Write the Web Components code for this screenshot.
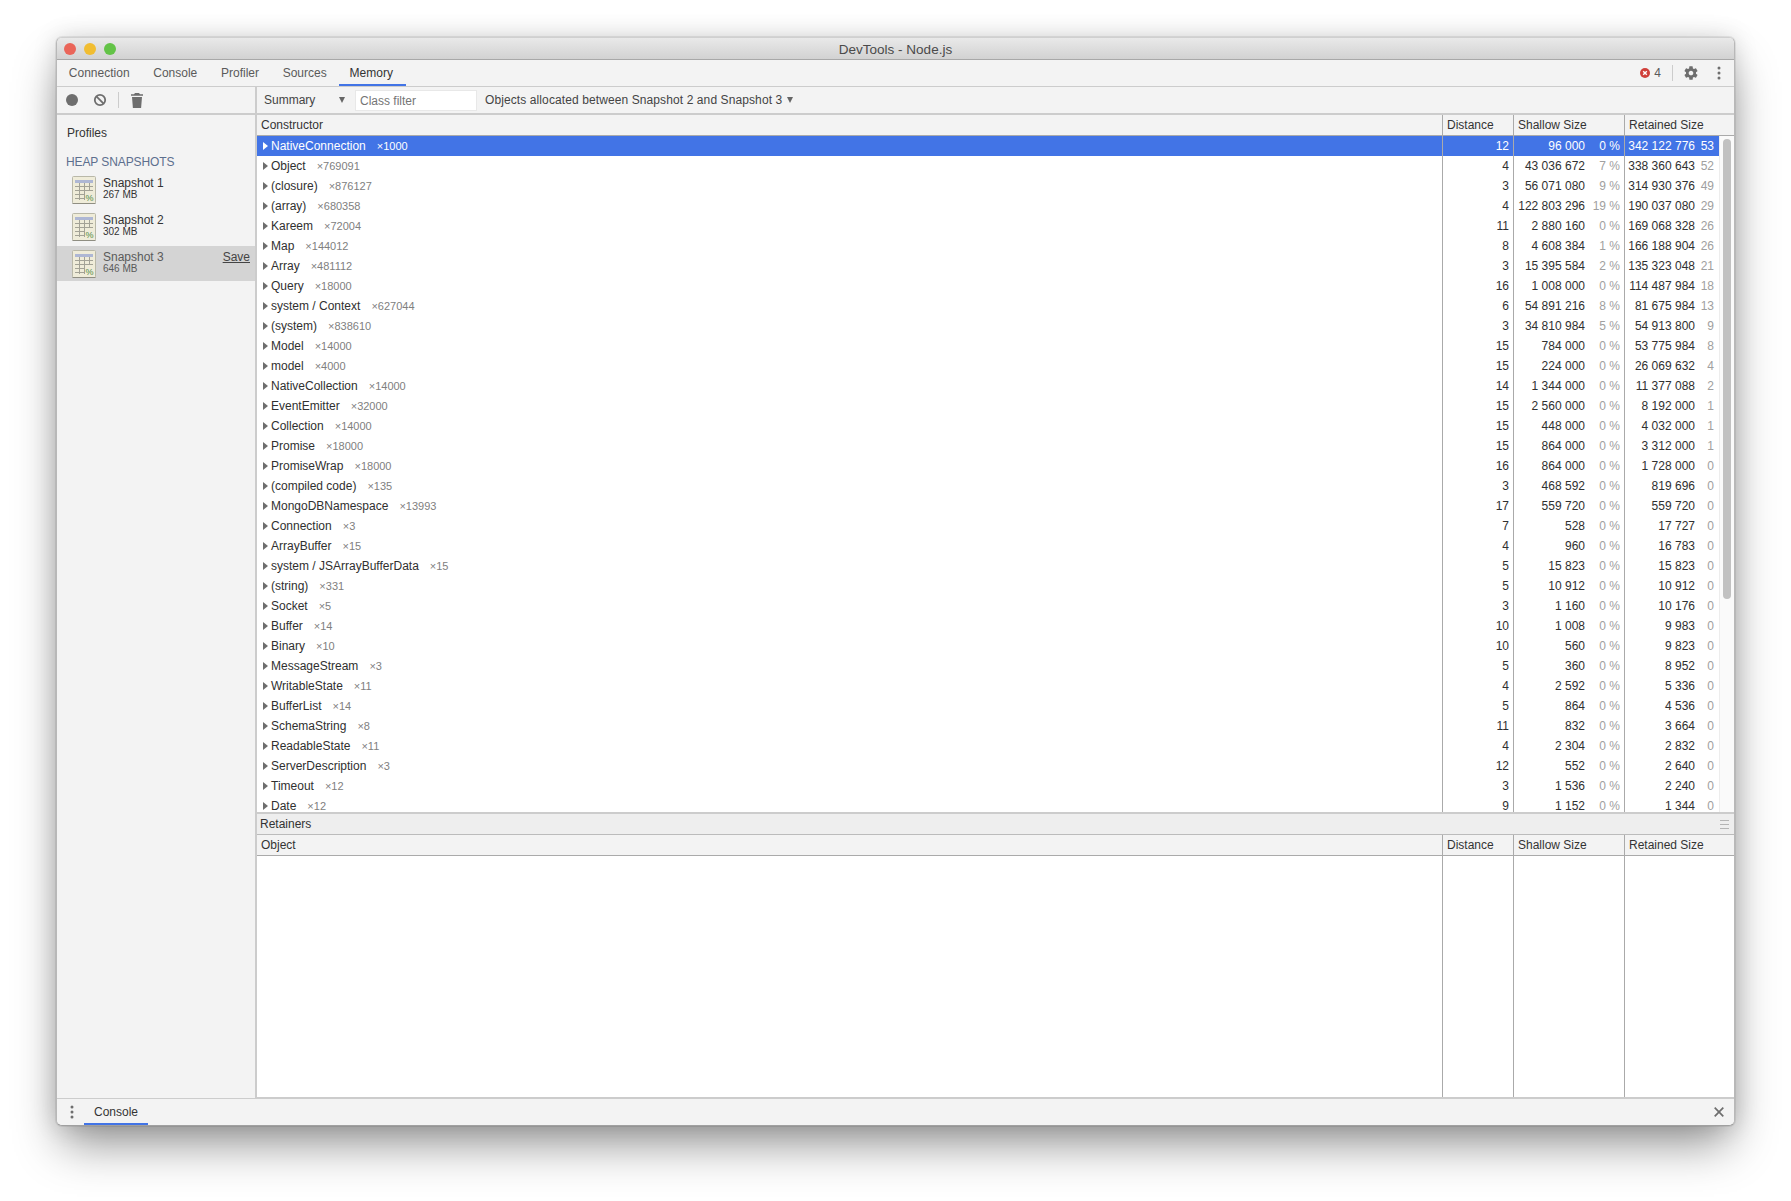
<!DOCTYPE html>
<html>
<head>
<meta charset="utf-8">
<title>DevTools - Node.js</title>
<style>
    html, body { margin: 0; background: #fff; }
    body { padding: 37px 56px 0; height: 1164px; overflow: hidden; font: 12px "Liberation Sans", Arial, sans-serif; color: #333; }
</style>
</head>
<body>
<dt-window></dt-window>

<script>
const ROWS = [
    ['NativeConnection', '1000', '12', '96 000', '0', '342 122 776', '53'],
    ['Object', '769091', '4', '43 036 672', '7', '338 360 643', '52'],
    ['(closure)', '876127', '3', '56 071 080', '9', '314 930 376', '49'],
    ['(array)', '680358', '4', '122 803 296', '19', '190 037 080', '29'],
    ['Kareem', '72004', '11', '2 880 160', '0', '169 068 328', '26'],
    ['Map', '144012', '8', '4 608 384', '1', '166 188 904', '26'],
    ['Array', '481112', '3', '15 395 584', '2', '135 323 048', '21'],
    ['Query', '18000', '16', '1 008 000', '0', '114 487 984', '18'],
    ['system / Context', '627044', '6', '54 891 216', '8', '81 675 984', '13'],
    ['(system)', '838610', '3', '34 810 984', '5', '54 913 800', '9'],
    ['Model', '14000', '15', '784 000', '0', '53 775 984', '8'],
    ['model', '4000', '15', '224 000', '0', '26 069 632', '4'],
    ['NativeCollection', '14000', '14', '1 344 000', '0', '11 377 088', '2'],
    ['EventEmitter', '32000', '15', '2 560 000', '0', '8 192 000', '1'],
    ['Collection', '14000', '15', '448 000', '0', '4 032 000', '1'],
    ['Promise', '18000', '15', '864 000', '0', '3 312 000', '1'],
    ['PromiseWrap', '18000', '16', '864 000', '0', '1 728 000', '0'],
    ['(compiled code)', '135', '3', '468 592', '0', '819 696', '0'],
    ['MongoDBNamespace', '13993', '17', '559 720', '0', '559 720', '0'],
    ['Connection', '3', '7', '528', '0', '17 727', '0'],
    ['ArrayBuffer', '15', '4', '960', '0', '16 783', '0'],
    ['system / JSArrayBufferData', '15', '5', '15 823', '0', '15 823', '0'],
    ['(string)', '331', '5', '10 912', '0', '10 912', '0'],
    ['Socket', '5', '3', '1 160', '0', '10 176', '0'],
    ['Buffer', '14', '10', '1 008', '0', '9 983', '0'],
    ['Binary', '10', '10', '560', '0', '9 823', '0'],
    ['MessageStream', '3', '5', '360', '0', '8 952', '0'],
    ['WritableState', '11', '4', '2 592', '0', '5 336', '0'],
    ['BufferList', '14', '5', '864', '0', '4 536', '0'],
    ['SchemaString', '8', '11', '832', '0', '3 664', '0'],
    ['ReadableState', '11', '4', '2 304', '0', '2 832', '0'],
    ['ServerDescription', '3', '12', '552', '0', '2 640', '0'],
    ['Timeout', '12', '3', '1 536', '0', '2 240', '0'],
    ['Date', '12', '9', '1 152', '0', '1 344', '0']
];

const COLS = '1185px 71px 111px 110px';

class HeapRow extends HTMLElement {
    connectedCallback() {
        const [name, count, dist, shallow, sp, retained, rp] = this.data;
        this.attachShadow({ mode: 'open' });
        this.shadowRoot.innerHTML = `
            <style>
                :host {
                    display: grid;
                    grid-template-columns: 1185px 71px 111px 95px;
                    height: 20px;
                    line-height: 20px;
                    color: #303030;
                    white-space: nowrap;
                }
                .name { display: flex; align-items: center; padding-left: 6px; }
                .arrow {
                    width: 0; height: 0; margin-right: 3px;
                    border-left: 5px solid #6e6e6e;
                    border-top: 4px solid transparent;
                    border-bottom: 4px solid transparent;
                }
                .count { margin-left: 11px; font-size: 11px; color: #808080; }
                .cell { border-left: 1px solid #aaa; text-align: right; }
                .dist { padding-right: 4px; }
                .pair { display: flex; justify-content: flex-end; padding-right: 4px; }
                .pair.ret { padding-right: 5px; }
                .sp { width: 35px; color: #a0a0a0; }
                .rp { width: 19px; color: #a0a0a0; }
                :host([selected]) { background: #4274e6; color: #fff; }
                :host([selected]) .arrow { border-left-color: #fff; }
                :host([selected]) .count,
                :host([selected]) .sp,
                :host([selected]) .rp { color: #fff; }
            </style>
            <div class="name"><span class="arrow"></span><span>${name}</span><span class="count">×${count}</span></div>
            <div class="cell dist">${dist}</div>
            <div class="cell pair"><span>${shallow}</span><span class="sp">${sp} %</span></div>
            <div class="cell pair ret"><span>${retained}</span><span class="rp">${rp}</span></div>
        `;
    }
}

class GridHeader extends HTMLElement {
    connectedCallback() {
        const labels = this.getAttribute('labels').split('|');
        this.attachShadow({ mode: 'open' });
        this.shadowRoot.innerHTML = `
            <style>
                :host {
                    display: grid;
                    grid-template-columns: ${COLS};
                    height: 20px;
                    line-height: 20px;
                    background: #f3f3f3;
                    border-bottom: 1px solid #aaa;
                    color: #333;
                    flex: none;
                }
                div { padding-left: 4px; }
                div + div { border-left: 1px solid #aaa; }
            </style>
            ${labels.map(l => `<div>${l}</div>`).join('')}
        `;
    }
}

class HeapGrid extends HTMLElement {
    connectedCallback() {
        this.attachShadow({ mode: 'open' });
        this.shadowRoot.innerHTML = `
            <style>
                :host { display: flex; height: 676px; overflow: hidden; flex: none; background: #fff; }
                .rows { width: 1462px; flex: none; }
                .track { flex: 1; border-left: 1px solid #ededed; background: #fafafa; padding: 3px 3px 0 3px; }
                .thumb { width: 8px; height: 460px; background: #c1c1c1; border-radius: 4px; }
            </style>
            <div class="rows"></div>
            <div class="track"><div class="thumb"></div></div>
        `;
        const rows = this.shadowRoot.querySelector('.rows');
        ROWS.forEach((data, i) => {
            const row = document.createElement('heap-row');
            row.data = data;
            if (i === 0) row.setAttribute('selected', '');
            rows.appendChild(row);
        });
    }
}

class EmptyGrid extends HTMLElement {
    connectedCallback() {
        this.attachShadow({ mode: 'open' });
        this.shadowRoot.innerHTML = `
            <style>
                :host { display: grid; grid-template-columns: ${COLS}; flex: 1; background: #fff; }
                div + div { border-left: 1px solid #aaa; }
            </style>
            <div></div><div></div><div></div><div></div>
        `;
    }
}

class SnapshotItem extends HTMLElement {
    connectedCallback() {
        this.attachShadow({ mode: 'open' });
        this.shadowRoot.innerHTML = `
            <style>
                :host {
                    display: flex;
                    align-items: center;
                    height: 35px;
                    margin-bottom: 2px;
                    padding: 0 5px 0 15px;
                    color: #333;
                }
                :host([selected]) { background: #d4d4d4; color: #5a5a5a; }
                svg { flex: none; margin-right: 7px; }
                .text { flex: 1; line-height: 12px; margin-top: -3px; }
                .sub { font-size: 10px; line-height: 11px; }
                ::slotted(u) { color: #444; align-self: flex-start; margin-top: 4px; }
            </style>
            <svg width="24" height="28" viewBox="0 0 24 28">
                <rect x="0.5" y="0.5" width="23" height="27" rx="1" fill="#efecd9" stroke="#b9b8a8"/>
                <path d="M0.5 27.500h23" stroke="#8f8e82"/>
                <rect x="3" y="4" width="18" height="3" fill="#aeb7d4"/>
                <path d="M3 10.500h18M3 14.500h18M3 18.500h9M3 22.500h9M7.500 7v17M12.500 7v17M17.500 7v7" stroke="#a3a296" fill="none"/>
                <text x="13.500" y="24.500" font-size="9" fill="#4f8a45" font-family="Liberation Sans">%</text>
            </svg>
            <div class="text">
                <div>${this.getAttribute('name')}</div>
                <div class="sub">${this.getAttribute('size')}</div>
            </div>
            <slot></slot>
        `;
    }
}

class ProfileSidebar extends HTMLElement {
    connectedCallback() {
        this.attachShadow({ mode: 'open' });
        this.shadowRoot.innerHTML = `
            <style>
                :host { display: block; width: 198px; flex: none; background: #f3f3f3; }
                .title { height: 14px; line-height: 14px; padding: 11px 0 0 10px; color: #333; }
                .group { height: 14px; line-height: 14px; margin: 15px 0 3px 9px; color: #5d6f8e; letter-spacing: -0.1px; }
            </style>
            <div class="title">Profiles</div>
            <div class="group">HEAP SNAPSHOTS</div>
            <snapshot-item name="Snapshot 1" size="267 MB"></snapshot-item>
            <snapshot-item name="Snapshot 2" size="302 MB"></snapshot-item>
            <snapshot-item name="Snapshot 3" size="646 MB" selected><u>Save</u></snapshot-item>
        `;
    }
}

class RecordBar extends HTMLElement {
    connectedCallback() {
        this.attachShadow({ mode: 'open' });
        this.shadowRoot.innerHTML = `
            <style>
                :host {
                    display: flex;
                    align-items: center;
                    height: 26px;
                    width: 198px;
                    flex: none;
                    box-sizing: border-box;
                    padding-left: 8px;
                }
                svg { display: block; flex: none; }
                .sep { width: 1px; height: 16px; background: #ccc; margin: 0 12px 0 11px; }
            </style>
            <svg width="14" height="14" viewBox="0 0 14 14" style="margin-right:14px"><circle cx="7" cy="7" r="6" fill="#6e6e6e"/></svg>
            <svg width="14" height="14" viewBox="0 0 14 14"><circle cx="7" cy="7" r="5.200" fill="none" stroke="#6e6e6e" stroke-width="1.800"/><path d="M3.400 3.400l7.200 7.200" stroke="#6e6e6e" stroke-width="1.800"/></svg>
            <span class="sep"></span>
            <svg width="12" height="15" viewBox="0 0 12 15"><path d="M4 0h4l1 1.200h3v1.600H0V1.200h3zM1 4h10l-.9 11H1.900z" fill="#6e6e6e"/></svg>
        `;
    }
}

class FilterBar extends HTMLElement {
    connectedCallback() {
        this.attachShadow({ mode: 'open' });
        this.shadowRoot.innerHTML = `
            <style>
                :host {
                    display: flex;
                    align-items: center;
                    height: 26px;
                    flex: 1;
                    border-left: 2px solid #ccc;
                    color: #444;
                    white-space: nowrap;
                }
                .select { display: flex; align-items: center; justify-content: space-between; width: 82px; margin-left: 7px; }
                .tri { width: 0; height: 0; border-top: 6px solid #666; border-left: 3.500px solid transparent; border-right: 3.500px solid transparent; }
                .select .tri { margin-right: 1px; }
                .input {
                    box-sizing: border-box;
                    width: 122px;
                    height: 21px;
                    line-height: 20px;
                    margin: 0 8px 0 9px;
                    padding-left: 4px;
                    background: #fff;
                    border: 1px solid #e8e8e8;
                    color: #757575;
                }
                .range { margin-right: 5px; letter-spacing: 0.1px; }
            </style>
            <div class="select"><span>Summary</span><span class="tri"></span></div>
            <div class="input">Class filter</div>
            <span class="range">Objects allocated between Snapshot 2 and Snapshot 3</span>
            <span class="tri"></span>
        `;
    }
}

class DtTabs extends HTMLElement {
    connectedCallback() {
        this.attachShadow({ mode: 'open' });
        const names = ['Connection', 'Console', 'Profiler', 'Sources', 'Memory'];
        this.shadowRoot.innerHTML = `
            <style>
                :host {
                    display: flex;
                    align-items: stretch;
                    height: 26px;
                    background: #f3f3f3;
                    border-bottom: 1px solid #ccc;
                    color: #5a5a5a;
                    flex: none;
                }
                .tab { padding: 0 11.850px; line-height: 26px; }
                .tab:first-child { padding-left: 10.500px; }
                .tab.on { color: #333; box-shadow: inset 0 -2px 0 #4274e6; padding: 0 13px 0 11px; }
                .right { margin-left: auto; display: flex; align-items: center; padding-right: 13px; }
                .err { display: flex; align-items: center; gap: 4px; color: #5a5a5a; }
                .sep { width: 1px; height: 16px; background: #ccc; margin: 0 10px 0 11px; }
                svg { display: block; flex: none; }
            </style>
            ${names.map(n => `<div class="tab${n === 'Memory' ? ' on' : ''}">${n}</div>`).join('')}
            <div class="right">
                <div class="err">
                    <svg width="10" height="10" viewBox="0 0 10 10"><circle cx="5" cy="5" r="5" fill="#d0403a"/><path d="M3.200 3.200l3.600 3.600M6.800 3.200l-3.600 3.600" stroke="#fff" stroke-width="1.400"/></svg>
                    <span>4</span>
                </div>
                <span class="sep"></span>
                <svg width="16" height="16" viewBox="0 0 24 24" style="margin-right:18px"><path fill="#6e6e6e" d="M19.430 12.980c.04-.32.07-.64.070-.98s-.03-.66-.07-.98l2.110-1.650c.19-.15.240-.42.120-.64l-2-3.460c-.12-.22-.390-.3-.610-.22l-2.490 1c-.52-.4-1.080-.73-1.690-.98l-.380-2.650A.49.490 0 0 0 14 2h-4c-.25 0-.46.180-.49.420l-.38 2.650c-.61.250-1.170.59-1.690.98l-2.490-1c-.23-.09-.49 0-.61.220l-2 3.460c-.13.220-.07.490.12.640l2.110 1.650c-.04.320-.07.650-.07.980s.03.660.07.980l-2.110 1.650c-.19.150-.24.420-.12.640l2 3.460c.12.220.39.300.61.220l2.490-1c.52.400 1.080.730 1.690.980l.38 2.650c.03.240.24.420.49.420h4c.25 0 .46-.18.490-.42l.38-2.650c.61-.25 1.170-.59 1.690-.98l2.490 1c.23.090.49 0 .61-.22l2-3.460c.12-.22.070-.49-.12-.64l-2.110-1.650zM12 15.500c-1.930 0-3.500-1.570-3.500-3.500s1.570-3.500 3.500-3.500 3.500 1.570 3.500 3.500-1.570 3.500-3.500 3.500z"/></svg>
                <svg width="4" height="14" viewBox="0 0 4 14"><circle cx="2" cy="2" r="1.500" fill="#6e6e6e"/><circle cx="2" cy="7" r="1.500" fill="#6e6e6e"/><circle cx="2" cy="12" r="1.500" fill="#6e6e6e"/></svg>
            </div>
        `;
    }
}

class DtTitlebar extends HTMLElement {
    connectedCallback() {
        this.attachShadow({ mode: 'open' });
        this.shadowRoot.innerHTML = `
            <style>
                :host {
                    display: flex;
                    align-items: center;
                    height: 21px;
                    flex: none;
                    position: relative;
                    padding-left: 7px;
                    gap: 8px;
                    background: linear-gradient(#e9e9e9, #d2d2d2);
                    border-bottom: 1px solid #a8a8a8;
                    border-radius: 5px 5px 0 0;
                }
                i { width: 12px; height: 12px; border-radius: 50%; }
                .title { position: absolute; left: 0; right: 0; padding-top: 2px; text-align: center; font-size: 13.500px; color: #4a4a4a; }
            </style>
            <i style="background:#ea6559"></i><i style="background:#f1bd31"></i><i style="background:#63c347"></i>
            <div class="title">DevTools - Node.js</div>
        `;
    }
}

class DtDrawer extends HTMLElement {
    connectedCallback() {
        this.attachShadow({ mode: 'open' });
        this.shadowRoot.innerHTML = `
            <style>
                :host {
                    display: flex;
                    align-items: stretch;
                    height: 26px;
                    flex: none;
                    background: #f3f3f3;
                    border-top: 1px solid #ccc;
                    padding-left: 13px;
                    border-radius: 0 0 5px 5px;
                }
                svg { display: block; align-self: center; flex: none; }
                .tab { margin-left: 10px; width: 64px; text-align: center; line-height: 26px; color: #333; box-shadow: inset 0 -2px 0 #4274e6; }
                .close { margin-left: auto; margin-right: 10px; }
            </style>
            <svg width="4" height="14" viewBox="0 0 4 14"><circle cx="2" cy="2" r="1.500" fill="#6e6e6e"/><circle cx="2" cy="7" r="1.500" fill="#6e6e6e"/><circle cx="2" cy="12" r="1.500" fill="#6e6e6e"/></svg>
            <div class="tab">Console</div>
            <svg class="close" width="10" height="10" viewBox="0 0 10 10"><path d="M.7.700l8.600 8.600M9.300.700L.7 9.300" stroke="#6e6e6e" stroke-width="1.700"/></svg>
        `;
    }
}

class DtWindow extends HTMLElement {
    connectedCallback() {
        this.attachShadow({ mode: 'open' });
        this.shadowRoot.innerHTML = `
            <style>
                :host {
                    display: flex;
                    flex-direction: column;
                    box-sizing: border-box;
                    width: 1679px;
                    height: 1089px;
                    background: #f3f3f3;
                    border: 1px solid #b8b8b8;
                    border-top-color: #d0d0d0;
                    border-bottom-color: #a0a0a0;
                    border-radius: 6px;
                    box-shadow: 0 0 0 1px rgba(0, 0, 0, 0.07), 0 24px 44px -6px rgba(0, 0, 0, 0.42), 0 0 24px rgba(0, 0, 0, 0.14);
                }
                .bars { display: flex; flex: none; border-bottom: 2px solid #ccc; background: #f3f3f3; }
                .body { display: flex; flex: 1; min-height: 0; }
                .main { display: flex; flex-direction: column; flex: 1; min-width: 0; border-left: 2px solid #ccc; border-bottom: 1px solid #ccc; }
                .retainers {
                    flex: none;
                    height: 20px;
                    line-height: 20px;
                    padding-left: 3px;
                    background: #eee;
                    border-top: 2px solid #ccc;
                    border-bottom: 1px solid #bbb;
                    color: #333;
                    display: flex;
                    justify-content: space-between;
                    align-items: center;
                }
                .handle { width: 9px; height: 7px; margin-right: 5px; border-top: 1px solid #b5b5b5; border-bottom: 1px solid #b5b5b5; position: relative; }
                .handle::after { content: ''; position: absolute; left: 0; right: 0; top: 3px; border-top: 1px solid #b5b5b5; }
            </style>
            <dt-titlebar></dt-titlebar>
            <dt-tabs></dt-tabs>
            <div class="bars"><record-bar></record-bar><filter-bar></filter-bar></div>
            <div class="body">
                <profile-sidebar></profile-sidebar>
                <div class="main">
                    <grid-header labels="Constructor|Distance|Shallow Size|Retained Size"></grid-header>
                    <heap-grid></heap-grid>
                    <div class="retainers"><span>Retainers</span><span class="handle"></span></div>
                    <grid-header labels="Object|Distance|Shallow Size|Retained Size"></grid-header>
                    <empty-grid></empty-grid>
                </div>
            </div>
            <dt-drawer></dt-drawer>
        `;
    }
}

customElements.define('heap-row', HeapRow);
customElements.define('grid-header', GridHeader);
customElements.define('heap-grid', HeapGrid);
customElements.define('empty-grid', EmptyGrid);
customElements.define('snapshot-item', SnapshotItem);
customElements.define('profile-sidebar', ProfileSidebar);
customElements.define('record-bar', RecordBar);
customElements.define('filter-bar', FilterBar);
customElements.define('dt-tabs', DtTabs);
customElements.define('dt-titlebar', DtTitlebar);
customElements.define('dt-drawer', DtDrawer);
customElements.define('dt-window', DtWindow);
</script>
</body>
</html>
